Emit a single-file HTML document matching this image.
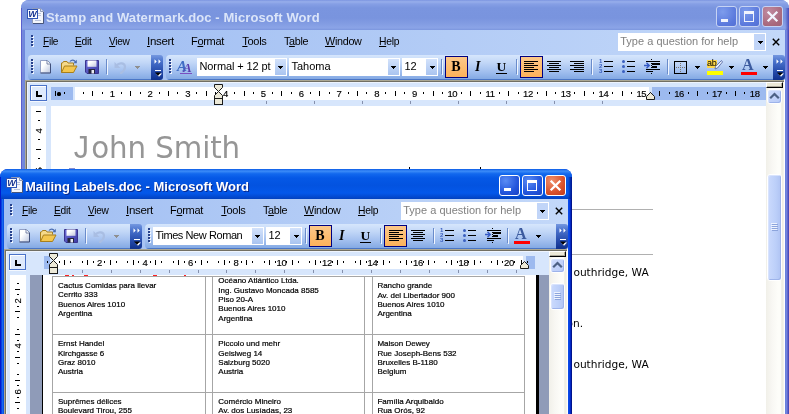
<!DOCTYPE html>
<html><head><meta charset="utf-8"><title>Microsoft Word</title>
<style>
html,body{margin:0;padding:0;background:#fff}
body{width:789px;height:414px;position:relative;overflow:hidden;font-family:"Liberation Sans",sans-serif}
#s{position:absolute;left:0;top:0;width:789px;height:414px;overflow:hidden;background:#fff;will-change:transform}
#s div,#s span,#s svg{position:absolute}
#s div{box-sizing:content-box}
.t{white-space:nowrap;font-family:"Liberation Sans",sans-serif;font-size:11px;line-height:14px}
.t u{text-decoration:underline;text-underline-offset:1px}
.rn,.vn{width:20px;height:20px;line-height:20px;text-align:center;font-size:9.5px;letter-spacing:-0.4px;-webkit-text-stroke:0.15px #000}
.vn{transform:rotate(-90deg)}
</style></head><body><div id="s">
<svg class="i" width="0" height="0" style="left:0;top:0"><defs>
<linearGradient id="gn" x1="0" y1="0" x2="1" y2="1"><stop offset="0.35" stop-color="#fff"/><stop offset="1" stop-color="#b9c4de"/></linearGradient>
<linearGradient id="gs" x1="0" y1="0" x2="1" y2="1"><stop offset="0" stop-color="#7070d8"/><stop offset="1" stop-color="#3c3ca4"/></linearGradient>
<linearGradient id="gl" x1="0" y1="0" x2="1" y2="1"><stop offset="0.3" stop-color="#fff"/><stop offset="1" stop-color="#c3c8de"/></linearGradient>
</defs></svg>
<div style="left:21px;top:0px;width:768px;height:414px;background:#7b93e1;border-radius:8px 8px 0 0"></div>
<div style="left:21px;top:0px;width:768px;height:30px;background:linear-gradient(#7c95e0 0,#97aeeb 6%,#869fe5 13%,#7a95df 26%,#7994de 60%,#839de3 80%,#8ba4e7 93%,#7b96de 100%);border-radius:8px 8px 0 0"></div>
<div style="left:21px;top:30px;width:1px;height:384px;background:#5a60cc"></div>
<div style="left:22px;top:30px;width:1px;height:384px;background:#7888dc"></div>
<div style="left:23px;top:30px;width:1px;height:384px;background:#7089dd"></div>
<div style="left:24px;top:30px;width:1px;height:384px;background:#6e86dc"></div>
<div style="left:785px;top:30px;width:1px;height:384px;background:#6a80dc"></div>
<div style="left:786px;top:30px;width:1px;height:384px;background:#7086dd"></div>
<div style="left:787px;top:30px;width:1px;height:384px;background:#6468cc"></div>
<div style="left:788px;top:30px;width:1px;height:384px;background:#494cba"></div>
<div style="left:21px;top:8px;width:1px;height:22px;background:#5a60cc"></div>
<div style="left:785px;top:8px;width:4px;height:22px;background:linear-gradient(90deg,transparent,#494cba)"></div>
<svg class="i" style="left:27px;top:8px" width="18" height="17" viewBox="0 0 18 17" >
<path d="M5.500 0.500h8l3 3v12h-11z" fill="#f4f6fb" stroke="#8d99b8" stroke-width="1"/>
<path d="M16.500 4v11.500h-10.500" fill="none" stroke="#47557c" stroke-width="1"/>
<path d="M13.500 0.500v3h3" fill="#dfe6f5" stroke="#8d99b8"/>
<path d="M8 12.500h6M11 5.500h3M11 7.500h3" stroke="#b9c3dd"/>
<rect x="0.500" y="1.500" width="10" height="9" fill="#fdfdff" stroke="#2f55b5"/>
<text x="1.300" y="9.300" font-family="Liberation Sans,sans-serif" font-weight="bold" font-style="italic" font-size="9.500" fill="#17348f" textLength="8.400" lengthAdjust="spacingAndGlyphs">W</text></svg>
<span class="t" style="left:46px;top:9.00px;font-size:13px;line-height:17px;color:#dbe5f9;font-weight:bold;letter-spacing:0.09px;">Stamp and Watermark.doc - Microsoft Word</span>
<div style="left:716px;top:6px;width:19px;height:19px;background:radial-gradient(circle at 30% 25%,#7d9cec,#5a78dc 70%,#5470d4);border:1px solid #c6d3f4;border-radius:3px"></div>
<div style="left:721px;top:19px;width:7px;height:3px;background:#f1f4fd"></div>
<div style="left:739px;top:6px;width:19px;height:19px;background:radial-gradient(circle at 30% 25%,#7d9cec,#5a78dc 70%,#5470d4);border:1px solid #c6d3f4;border-radius:3px"></div>
<div style="left:744px;top:11px;width:8px;height:7px;border:1px solid #f1f4fd;border-top-width:3px"></div>
<div style="left:762px;top:6px;width:19px;height:19px;background:radial-gradient(circle at 30% 25%,#c08aa0,#a8687c 70%,#a06478);border:1px solid #c6d3f4;border-radius:3px"></div>
<svg class="i" style="left:766px;top:10px" width="13" height="13" viewBox="0 0 13 13" ><path d="M1.700 1.700l9.600 9.600M11.300 1.700l-9.600 9.600" stroke="#f1f4fd" stroke-width="2.300" fill="none"/></svg>
<div style="left:25px;top:30px;width:760px;height:50px;background:linear-gradient(90deg,#9fbdf2,#c3d8f9)"></div>
<div style="left:32px;top:36px;width:2px;height:2px;background:#eef4fe"></div>
<div style="left:31px;top:35px;width:2px;height:2px;background:#27418c"></div>
<div style="left:32px;top:39px;width:2px;height:2px;background:#eef4fe"></div>
<div style="left:31px;top:38px;width:2px;height:2px;background:#27418c"></div>
<div style="left:32px;top:42px;width:2px;height:2px;background:#eef4fe"></div>
<div style="left:31px;top:41px;width:2px;height:2px;background:#27418c"></div>
<div style="left:32px;top:45px;width:2px;height:2px;background:#eef4fe"></div>
<div style="left:31px;top:44px;width:2px;height:2px;background:#27418c"></div>
<span class="t" style="left:42.6px;top:33.99px;font-size:11px;line-height:14px;color:#000;letter-spacing:-0.3px;transform:scaleX(0.92);transform-origin:0 0"><u>F</u>ile</span>
<span class="t" style="left:75px;top:33.99px;font-size:11px;line-height:14px;color:#000;letter-spacing:-0.3px;transform:scaleX(0.93);transform-origin:0 0"><u>E</u>dit</span>
<span class="t" style="left:109.3px;top:33.99px;font-size:11px;line-height:14px;color:#000;letter-spacing:-0.3px;transform:scaleX(0.92);transform-origin:0 0"><u>V</u>iew</span>
<span class="t" style="left:147px;top:33.99px;font-size:11px;line-height:14px;color:#000;letter-spacing:-0.3px;transform:scaleX(1.05);transform-origin:0 0"><u>I</u>nsert</span>
<span class="t" style="left:191.0px;top:33.99px;font-size:11px;line-height:14px;color:#000;letter-spacing:-0.3px;transform:scaleX(1.0);transform-origin:0 0">F<u>o</u>rmat</span>
<span class="t" style="left:242.3px;top:33.99px;font-size:11px;line-height:14px;color:#000;letter-spacing:-0.3px;transform:scaleX(1.0);transform-origin:0 0"><u>T</u>ools</span>
<span class="t" style="left:283.5px;top:33.99px;font-size:11px;line-height:14px;color:#000;letter-spacing:-0.3px;transform:scaleX(0.98);transform-origin:0 0">T<u>a</u>ble</span>
<span class="t" style="left:324.8px;top:33.99px;font-size:11px;line-height:14px;color:#000;letter-spacing:-0.3px;transform:scaleX(0.98);transform-origin:0 0"><u>W</u>indow</span>
<span class="t" style="left:379px;top:33.99px;font-size:11px;line-height:14px;color:#000;letter-spacing:-0.3px;transform:scaleX(0.94);transform-origin:0 0"><u>H</u>elp</span>
<div style="left:618px;top:33px;width:148px;height:18px;background:#fff"></div>
<div style="left:754px;top:34px;width:11px;height:16px;background:#c1d5f8"></div>
<svg class="i" style="left:758px;top:41px" width="5" height="3" viewBox="0 0 5 3" fill="#000" shape-rendering="crispEdges"><rect x="0" y="0" width="5" height="1"/><rect x="1" y="1" width="3" height="1"/><rect x="2" y="2" width="1" height="1"/></svg>
<span class="t" style="left:620.2px;top:33.79px;font-size:11px;line-height:14px;color:#808080;letter-spacing:0.02px">Type a question for help</span>
<svg class="i" style="left:772px;top:38px" width="8" height="8" viewBox="0 0 8 8" ><path d="M0.800 0.800l6.400 6.400M7.200 0.800l-6.400 6.400" stroke="#000" stroke-width="1.400" fill="none"/></svg>
<div style="left:28px;top:55px;width:124px;height:25px;background:linear-gradient(#d6e6fc 0,#c2d7f7 30%,#a3c0ef 65%,#8aaee6 90%,#84a9e3 96%,#4a76c6 96%,#4a76c6 100%);border-radius:4px 0 0 4px"></div>
<div style="left:151px;top:55px;width:12px;height:25px;background:linear-gradient(#7598e0 0,#4a72cc 25%,#2348a8 70%,#0f318c 100%);border-radius:0 3px 3px 0"></div>
<svg class="i" style="left:154px;top:59px" width="8" height="5" viewBox="0 0 8 5" ><path d="M0.500 0.300l2.200 2.200-2.200 2.200zM4.500 0.300l2.200 2.200-2.200 2.200z" fill="#fff"/></svg>
<div style="left:155px;top:70px;width:6px;height:1px;background:#fff"></div>
<svg class="i" style="left:154px;top:72px" width="9" height="6" viewBox="0 0 9 6" ><path d="M2 1.500h6l-3 3.200z" fill="#fff"/><path d="M1 0.500h6l-3 3.200z" fill="#000"/></svg>
<div style="left:32px;top:60px;width:2px;height:2px;background:#eef4fe"></div>
<div style="left:31px;top:59px;width:2px;height:2px;background:#27418c"></div>
<div style="left:32px;top:63px;width:2px;height:2px;background:#eef4fe"></div>
<div style="left:31px;top:62px;width:2px;height:2px;background:#27418c"></div>
<div style="left:32px;top:66px;width:2px;height:2px;background:#eef4fe"></div>
<div style="left:31px;top:65px;width:2px;height:2px;background:#27418c"></div>
<div style="left:32px;top:69px;width:2px;height:2px;background:#eef4fe"></div>
<div style="left:31px;top:68px;width:2px;height:2px;background:#27418c"></div>
<div style="left:32px;top:72px;width:2px;height:2px;background:#eef4fe"></div>
<div style="left:31px;top:71px;width:2px;height:2px;background:#27418c"></div>
<svg class="i" style="left:40px;top:60px" width="12" height="14" viewBox="0 0 12 14" >
<path d="M0.500 0.500h6.500l3.500 3.500v9h-10z" fill="url(#gn)" stroke="#93a1c6"/>
<path d="M7 0.500l3.500 3.500v9h-10" fill="none" stroke="#3f4f7a"/>
<path d="M7 0.500v3.500h3.500" fill="#fff" stroke="#5b6a94" stroke-width="0.800"/></svg>
<svg class="i" style="left:61px;top:59px" width="17" height="15" viewBox="0 0 17 15" >
<path d="M0.500 13.500v-9.500h1l1-1.500h3.500l1 1.500h5.500v2.500" fill="#f5d98a" stroke="#a77f1c"/>
<path d="M0.500 13.500l3-6.500h12.500l-3.500 6.500z" fill="#f3c64e" stroke="#a77f1c"/>
<path d="M9 2.500c1.500-2 4.500-2 5.500 0.500" fill="none" stroke="#4a6cb0" stroke-width="1.200"/>
<path d="M15.800 0.800v3.400h-3.400z" fill="#4a6cb0"/></svg>
<svg class="i" style="left:85px;top:60px" width="14" height="14" viewBox="0 0 14 14" >
<path d="M0.500 0.500h13v13h-11.500l-1.500-1.500z" fill="url(#gs)" stroke="#3a348f"/>
<rect x="2.500" y="0.500" width="9" height="6.300" fill="url(#gl)"/>
<rect x="3.500" y="9" width="6.500" height="4.500" fill="#25253a"/>
<rect x="6.500" y="10" width="2.500" height="3.500" fill="#e9ebf3"/></svg>
<div style="left:106px;top:59px;width:1px;height:15px;background:#6a8ccb"></div>
<div style="left:107px;top:60px;width:1px;height:15px;background:#f1f6fe"></div>
<svg class="i" style="left:114px;top:60px" width="14" height="14" viewBox="0 0 14 14" >
<path d="M2.500 5.500c3-3.500 8.500-2.500 8.500 1.500c0 3-2 4.500-4 6" fill="none" stroke="#a9bee3" stroke-width="2.200" stroke-linecap="round"/>
<path d="M0.500 2v6h6z" fill="#a9bee3"/></svg>
<svg class="i" style="left:135px;top:66px" width="5" height="3" viewBox="0 0 5 3" fill="#8f8f8f" shape-rendering="crispEdges"><rect x="0" y="0" width="5" height="1"/><rect x="1" y="1" width="3" height="1"/><rect x="2" y="2" width="1" height="1"/></svg>
<div style="left:166px;top:55px;width:607px;height:25px;background:linear-gradient(#d6e6fc 0,#c2d7f7 30%,#a3c0ef 65%,#8aaee6 90%,#84a9e3 96%,#4a76c6 96%,#4a76c6 100%);border-radius:4px 0 0 4px"></div>
<div style="left:773px;top:55px;width:12px;height:25px;background:linear-gradient(#7598e0 0,#4a72cc 25%,#2348a8 70%,#0f318c 100%);border-radius:0 3px 3px 0"></div>
<svg class="i" style="left:776px;top:59px" width="8" height="5" viewBox="0 0 8 5" ><path d="M0.500 0.300l2.200 2.200-2.200 2.200zM4.500 0.300l2.200 2.200-2.200 2.200z" fill="#fff"/></svg>
<div style="left:777px;top:70px;width:6px;height:1px;background:#fff"></div>
<svg class="i" style="left:776px;top:72px" width="9" height="6" viewBox="0 0 9 6" ><path d="M2 1.500h6l-3 3.200z" fill="#fff"/><path d="M1 0.500h6l-3 3.200z" fill="#000"/></svg>
<div style="left:170px;top:60px;width:2px;height:2px;background:#eef4fe"></div>
<div style="left:169px;top:59px;width:2px;height:2px;background:#27418c"></div>
<div style="left:170px;top:63px;width:2px;height:2px;background:#eef4fe"></div>
<div style="left:169px;top:62px;width:2px;height:2px;background:#27418c"></div>
<div style="left:170px;top:66px;width:2px;height:2px;background:#eef4fe"></div>
<div style="left:169px;top:65px;width:2px;height:2px;background:#27418c"></div>
<div style="left:170px;top:69px;width:2px;height:2px;background:#eef4fe"></div>
<div style="left:169px;top:68px;width:2px;height:2px;background:#27418c"></div>
<div style="left:170px;top:72px;width:2px;height:2px;background:#eef4fe"></div>
<div style="left:169px;top:71px;width:2px;height:2px;background:#27418c"></div>
<span class="t" style="left:177px;top:58px;font:italic bold 15px/16px 'Liberation Serif',serif;color:#3f6cc4">A</span>
<span class="t" style="left:183px;top:61px;font:italic bold 13px/14px 'Liberation Serif',serif;color:#5a3fb0">A</span>
<div style="left:180px;top:73px;width:12px;height:1px;background:#7a4fc0"></div>
<div style="left:197px;top:58px;width:89.5px;height:18px;background:#fff"></div>
<div style="left:274.5px;top:59px;width:11px;height:16px;background:linear-gradient(#d3e2fb,#a9c4f0)"></div>
<svg class="i" style="left:278px;top:66px" width="5" height="3" viewBox="0 0 5 3" fill="#000" shape-rendering="crispEdges"><rect x="0" y="0" width="5" height="1"/><rect x="1" y="1" width="3" height="1"/><rect x="2" y="2" width="1" height="1"/></svg>
<span class="t" style="left:199.5px;top:59.19px;font-size:11px;line-height:14px;color:#000;letter-spacing:-0.1px">Normal + 12 pt</span>
<div style="left:289px;top:58px;width:110.5px;height:18px;background:#fff"></div>
<div style="left:387.5px;top:59px;width:11px;height:16px;background:linear-gradient(#d3e2fb,#a9c4f0)"></div>
<svg class="i" style="left:391px;top:66px" width="5" height="3" viewBox="0 0 5 3" fill="#000" shape-rendering="crispEdges"><rect x="0" y="0" width="5" height="1"/><rect x="1" y="1" width="3" height="1"/><rect x="2" y="2" width="1" height="1"/></svg>
<span class="t" style="left:291.5px;top:59.19px;font-size:11px;line-height:14px;color:#000;letter-spacing:0px">Tahoma</span>
<div style="left:402px;top:58px;width:36px;height:18px;background:#fff"></div>
<div style="left:426px;top:59px;width:11px;height:16px;background:linear-gradient(#d3e2fb,#a9c4f0)"></div>
<svg class="i" style="left:430px;top:66px" width="5" height="3" viewBox="0 0 5 3" fill="#000" shape-rendering="crispEdges"><rect x="0" y="0" width="5" height="1"/><rect x="1" y="1" width="3" height="1"/><rect x="2" y="2" width="1" height="1"/></svg>
<span class="t" style="left:404.5px;top:59.19px;font-size:11px;line-height:14px;color:#000;letter-spacing:0px">12</span>
<div style="left:441px;top:59px;width:1px;height:15px;background:#6a8ccb"></div>
<div style="left:442px;top:60px;width:1px;height:15px;background:#f1f6fe"></div>
<div style="left:445px;top:56px;width:21px;height:20px;background:linear-gradient(#fcc88a,#fdb25a);border:1px solid #000080"></div>
<span class="t" style="left:451.3px;top:58px;font:bold 14px/18px 'Liberation Serif',serif;color:#000">B</span>
<span class="t" style="left:475px;top:58px;font:italic bold 14px/18px 'Liberation Serif',serif;color:#000">I</span>
<span class="t" style="left:496.5px;top:58px;font:bold 13.500px/18px 'Liberation Serif',serif;color:#000">U</span>
<div style="left:496px;top:73px;width:11px;height:1px;background:#000"></div>
<div style="left:515.5px;top:59px;width:1px;height:15px;background:#6a8ccb"></div>
<div style="left:516.5px;top:60px;width:1px;height:15px;background:#f1f6fe"></div>
<div style="left:520px;top:56px;width:21px;height:20px;background:linear-gradient(#fcc88a,#fdb25a);border:1px solid #000080"></div>
<svg class="i" style="left:524px;top:61px" width="16" height="14" viewBox="0 0 16 14" fill="#000" shape-rendering="crispEdges"><rect x="0" y="0" width="14" height="1"/><rect x="0" y="2" width="10" height="1"/><rect x="0" y="4" width="14" height="1"/><rect x="0" y="6" width="10" height="1"/><rect x="0" y="8" width="14" height="1"/><rect x="0" y="10" width="10" height="1"/></svg>
<svg class="i" style="left:547px;top:61px" width="16" height="14" viewBox="0 0 16 14" fill="#000" shape-rendering="crispEdges"><rect x="0" y="0" width="14" height="1"/><rect x="2" y="2" width="10" height="1"/><rect x="0" y="4" width="14" height="1"/><rect x="2" y="6" width="10" height="1"/><rect x="0" y="8" width="14" height="1"/><rect x="2" y="10" width="10" height="1"/></svg>
<svg class="i" style="left:570px;top:61px" width="16" height="14" viewBox="0 0 16 14" fill="#000" shape-rendering="crispEdges"><rect x="0" y="0" width="14" height="1"/><rect x="4" y="2" width="10" height="1"/><rect x="0" y="4" width="14" height="1"/><rect x="4" y="6" width="10" height="1"/><rect x="0" y="8" width="14" height="1"/><rect x="4" y="10" width="10" height="1"/></svg>
<div style="left:591px;top:59px;width:1px;height:15px;background:#6a8ccb"></div>
<div style="left:592px;top:60px;width:1px;height:15px;background:#f1f6fe"></div>
<svg class="i" style="left:604px;top:61px" width="16" height="14" viewBox="0 0 16 14" fill="#000" shape-rendering="crispEdges"><rect x="0" y="0" width="9" height="1"/><rect x="0" y="5" width="9" height="1"/><rect x="0" y="10" width="9" height="1"/></svg>
<span class="t" style="left:599px;top:58px;font:bold 6px/7px 'Liberation Sans',sans-serif;color:#3a5fc0">1</span>
<span class="t" style="left:599px;top:63px;font:bold 6px/7px 'Liberation Sans',sans-serif;color:#3a5fc0">2</span>
<span class="t" style="left:599px;top:68px;font:bold 6px/7px 'Liberation Sans',sans-serif;color:#3a5fc0">3</span>
<svg class="i" style="left:627px;top:61px" width="16" height="14" viewBox="0 0 16 14" fill="#000" shape-rendering="crispEdges"><rect x="0" y="0" width="8" height="1"/><rect x="0" y="5" width="8" height="1"/><rect x="0" y="10" width="8" height="1"/></svg>
<svg class="i" style="left:622px;top:60px" width="4" height="14" viewBox="0 0 4 14" fill="#3a5fc0"><circle cx="1.500" cy="1.500" r="1.500"/><circle cx="1.500" cy="6.500" r="1.500"/><circle cx="1.500" cy="11.500" r="1.500"/></svg>
<svg class="i" style="left:644px;top:59px" width="17" height="15" viewBox="0 0 17 15" fill="#000" shape-rendering="crispEdges"><rect x="2" y="2" width="14" height="1"/><rect x="8" y="4" width="8" height="2"/><rect x="8" y="7" width="5" height="2"/><rect x="2" y="10" width="14" height="1"/><rect x="2" y="12" width="7" height="1"/><rect x="6" y="0" width="3" height="15" fill="#c3d8f7" opacity="0.0"/><rect x="7" y="0" width="1" height="1"/><rect x="7" y="2" width="1" height="1"/><rect x="7" y="4" width="1" height="1"/><rect x="7" y="6" width="1" height="1"/><rect x="7" y="8" width="1" height="1"/><rect x="7" y="10" width="1" height="1"/><rect x="7" y="12" width="1" height="1"/><rect x="7" y="14" width="1" height="1"/></svg>
<svg class="i" style="left:644px;top:62px" width="7" height="7" viewBox="0 0 7 7" ><path d="M0 3.500h5M2.500 0.800l2.700 2.700L2.500 6.200" fill="none" stroke="#3358c4" stroke-width="1.400"/></svg>
<div style="left:666.5px;top:59px;width:1px;height:15px;background:#6a8ccb"></div>
<div style="left:667.5px;top:60px;width:1px;height:15px;background:#f1f6fe"></div>
<svg class="i" style="left:674px;top:61px" width="13" height="13" viewBox="0 0 13 13" shape-rendering="crispEdges"><path d="M0 0h13v13h-13zM1 1v11h11v-11z" fill="#000" fill-rule="evenodd"/><rect x="2" y="6" width="1" height="1" fill="#7d7468"/><rect x="6" y="2" width="1" height="1" fill="#7d7468"/><rect x="4" y="6" width="1" height="1" fill="#7d7468"/><rect x="6" y="4" width="1" height="1" fill="#7d7468"/><rect x="6" y="6" width="1" height="1" fill="#7d7468"/><rect x="6" y="6" width="1" height="1" fill="#7d7468"/><rect x="8" y="6" width="1" height="1" fill="#7d7468"/><rect x="6" y="8" width="1" height="1" fill="#7d7468"/><rect x="10" y="6" width="1" height="1" fill="#7d7468"/><rect x="6" y="10" width="1" height="1" fill="#7d7468"/></svg>
<svg class="i" style="left:695px;top:66px" width="5" height="3" viewBox="0 0 5 3" fill="#000" shape-rendering="crispEdges"><rect x="0" y="0" width="5" height="1"/><rect x="1" y="1" width="3" height="1"/><rect x="2" y="2" width="1" height="1"/></svg>
<div style="left:707px;top:60px;width:10px;height:8px;background:#ffd84a"></div>
<span class="t" style="left:707px;top:57px;font:9px/12px 'Liberation Sans',sans-serif;color:#000;letter-spacing:-0.3px">ab</span>
<svg class="i" style="left:713px;top:60px" width="10" height="10" viewBox="0 0 10 10" ><path d="M8.500 0.500l1 1.500-5 6-2.500 1 0.500-2.500z" fill="#e9eefb" stroke="#5a6fa8" stroke-width="0.900"/></svg>
<div style="left:707px;top:71px;width:16px;height:4px;background:#ffff00"></div>
<svg class="i" style="left:729px;top:66px" width="5" height="3" viewBox="0 0 5 3" fill="#000" shape-rendering="crispEdges"><rect x="0" y="0" width="5" height="1"/><rect x="1" y="1" width="3" height="1"/><rect x="2" y="2" width="1" height="1"/></svg>
<span class="t" style="left:742px;top:57px;font:bold 16px/16px 'Liberation Serif',serif;color:#3b5a9e">A</span>
<div style="left:741px;top:72px;width:16px;height:3px;background:#ff0000"></div>
<svg class="i" style="left:763px;top:66px" width="5" height="3" viewBox="0 0 5 3" fill="#000" shape-rendering="crispEdges"><rect x="0" y="0" width="5" height="1"/><rect x="1" y="1" width="3" height="1"/><rect x="2" y="2" width="1" height="1"/></svg>
<div style="left:25px;top:80px;width:760px;height:1px;background:#aca893"></div>
<div style="left:26px;top:81px;width:759px;height:1px;background:#716f64"></div>
<div style="left:25px;top:82px;width:760px;height:332px;background:#d7e6fc"></div>
<div style="left:25px;top:80px;width:1px;height:334px;background:#aca893"></div>
<div style="left:26px;top:81px;width:1px;height:333px;background:#716f64"></div>
<div style="left:27px;top:82px;width:758px;height:1px;background:#eef4fe"></div>
<div style="left:27px;top:82px;width:1px;height:332px;background:#eef4fe"></div>
<div style="left:30px;top:85px;width:17px;height:16px;background:#dfeafc;border:1px solid #4a72c9;box-sizing:border-box;box-shadow:0 1px 0 0 #f4f8fe, inset 1px 1px 0 0 #fff"></div>
<div style="left:36px;top:91px;width:2px;height:6px;background:#000"></div>
<div style="left:36px;top:95px;width:6px;height:2px;background:#000"></div>
<div style="left:51px;top:87px;width:22px;height:13px;background:#9dbaef"></div>
<div style="left:75px;top:87px;width:574px;height:13px;background:#fff"></div>
<div style="left:652px;top:87px;width:114px;height:13px;background:#9dbaef"></div>
<div style="left:55px;top:91px;width:1px;height:5px;background:#000"></div>
<div style="left:64px;top:92px;width:1px;height:2px;background:#000"></div>
<div style="left:83px;top:92px;width:1px;height:2px;background:#000"></div>
<div style="left:92px;top:91px;width:1px;height:5px;background:#000"></div>
<div style="left:102px;top:92px;width:1px;height:2px;background:#000"></div>
<span class="t rn" style="left:102.10px;top:83.50px">1</span>
<div style="left:121px;top:92px;width:1px;height:2px;background:#000"></div>
<div style="left:130px;top:91px;width:1px;height:5px;background:#000"></div>
<div style="left:140px;top:92px;width:1px;height:2px;background:#000"></div>
<span class="t rn" style="left:139.90px;top:83.50px">2</span>
<div style="left:159px;top:92px;width:1px;height:2px;background:#000"></div>
<div style="left:168px;top:91px;width:1px;height:5px;background:#000"></div>
<div style="left:177px;top:92px;width:1px;height:2px;background:#000"></div>
<span class="t rn" style="left:177.70px;top:83.50px">3</span>
<div style="left:196px;top:92px;width:1px;height:2px;background:#000"></div>
<div style="left:206px;top:91px;width:1px;height:5px;background:#000"></div>
<div style="left:215px;top:92px;width:1px;height:2px;background:#000"></div>
<span class="t rn" style="left:215.50px;top:83.50px">4</span>
<div style="left:234px;top:92px;width:1px;height:2px;background:#000"></div>
<div style="left:244px;top:91px;width:1px;height:5px;background:#000"></div>
<div style="left:253px;top:92px;width:1px;height:2px;background:#000"></div>
<span class="t rn" style="left:253.30px;top:83.50px">5</span>
<div style="left:272px;top:92px;width:1px;height:2px;background:#000"></div>
<div style="left:281px;top:91px;width:1px;height:5px;background:#000"></div>
<div style="left:291px;top:92px;width:1px;height:2px;background:#000"></div>
<span class="t rn" style="left:291.10px;top:83.50px">6</span>
<div style="left:310px;top:92px;width:1px;height:2px;background:#000"></div>
<div style="left:319px;top:91px;width:1px;height:5px;background:#000"></div>
<div style="left:329px;top:92px;width:1px;height:2px;background:#000"></div>
<span class="t rn" style="left:328.90px;top:83.50px">7</span>
<div style="left:348px;top:92px;width:1px;height:2px;background:#000"></div>
<div style="left:357px;top:91px;width:1px;height:5px;background:#000"></div>
<div style="left:366px;top:92px;width:1px;height:2px;background:#000"></div>
<span class="t rn" style="left:366.70px;top:83.50px">8</span>
<div style="left:385px;top:92px;width:1px;height:2px;background:#000"></div>
<div style="left:395px;top:91px;width:1px;height:5px;background:#000"></div>
<div style="left:404px;top:92px;width:1px;height:2px;background:#000"></div>
<span class="t rn" style="left:404.50px;top:83.50px">9</span>
<div style="left:423px;top:92px;width:1px;height:2px;background:#000"></div>
<div style="left:433px;top:91px;width:1px;height:5px;background:#000"></div>
<div style="left:442px;top:92px;width:1px;height:2px;background:#000"></div>
<span class="t rn" style="left:442.30px;top:83.50px">10</span>
<div style="left:461px;top:92px;width:1px;height:2px;background:#000"></div>
<div style="left:470px;top:91px;width:1px;height:5px;background:#000"></div>
<div style="left:480px;top:92px;width:1px;height:2px;background:#000"></div>
<span class="t rn" style="left:480.10px;top:83.50px">11</span>
<div style="left:499px;top:92px;width:1px;height:2px;background:#000"></div>
<div style="left:508px;top:91px;width:1px;height:5px;background:#000"></div>
<div style="left:518px;top:92px;width:1px;height:2px;background:#000"></div>
<span class="t rn" style="left:517.90px;top:83.50px">12</span>
<div style="left:537px;top:92px;width:1px;height:2px;background:#000"></div>
<div style="left:546px;top:91px;width:1px;height:5px;background:#000"></div>
<div style="left:555px;top:92px;width:1px;height:2px;background:#000"></div>
<span class="t rn" style="left:555.70px;top:83.50px">13</span>
<div style="left:574px;top:92px;width:1px;height:2px;background:#000"></div>
<div style="left:584px;top:91px;width:1px;height:5px;background:#000"></div>
<div style="left:593px;top:92px;width:1px;height:2px;background:#000"></div>
<span class="t rn" style="left:593.50px;top:83.50px">14</span>
<div style="left:612px;top:92px;width:1px;height:2px;background:#000"></div>
<div style="left:622px;top:91px;width:1px;height:5px;background:#000"></div>
<div style="left:631px;top:92px;width:1px;height:2px;background:#000"></div>
<span class="t rn" style="left:631.30px;top:83.50px">15</span>
<div style="left:650px;top:92px;width:1px;height:2px;background:#000"></div>
<div style="left:659px;top:91px;width:1px;height:5px;background:#000"></div>
<div style="left:669px;top:92px;width:1px;height:2px;background:#000"></div>
<span class="t rn" style="left:669.10px;top:83.50px">16</span>
<div style="left:688px;top:92px;width:1px;height:2px;background:#000"></div>
<div style="left:697px;top:91px;width:1px;height:5px;background:#000"></div>
<div style="left:707px;top:92px;width:1px;height:2px;background:#000"></div>
<span class="t rn" style="left:706.90px;top:83.50px">17</span>
<div style="left:726px;top:92px;width:1px;height:2px;background:#000"></div>
<div style="left:735px;top:91px;width:1px;height:5px;background:#000"></div>
<div style="left:744px;top:92px;width:1px;height:2px;background:#000"></div>
<span class="t rn" style="left:744.70px;top:83.50px">18</span>
<div style="left:57px;top:92px;width:4px;height:4px;background:#000;border-radius:1.600px"></div>
<div style="left:266px;top:101px;width:1px;height:3px;background:#8590ad"></div>
<div style="left:314px;top:101px;width:1px;height:3px;background:#8590ad"></div>
<div style="left:362px;top:101px;width:1px;height:3px;background:#8590ad"></div>
<div style="left:410px;top:101px;width:1px;height:3px;background:#8590ad"></div>
<div style="left:458px;top:101px;width:1px;height:3px;background:#8590ad"></div>
<div style="left:506px;top:101px;width:1px;height:3px;background:#8590ad"></div>
<div style="left:554px;top:101px;width:1px;height:3px;background:#8590ad"></div>
<div style="left:602px;top:101px;width:1px;height:3px;background:#8590ad"></div>
<svg class="i" style="left:214px;top:84px" width="9" height="21" viewBox="0 0 9 21" ><g fill="#ece9d8" stroke="#1a1a1a" stroke-width="1">
<path d="M0.500 0.500h8v3l-4 4-4-4z"/><path d="M0.500 14.500v-3l4-4 4 4v3z"/><rect x="0.500" y="14.500" width="8" height="6"/></g></svg>
<svg class="i" style="left:646px;top:92px" width="9" height="8" viewBox="0 0 9 8" ><path d="M0.500 7.500v-3l4-4 4 4v3z" fill="#ece9d8" stroke="#1a1a1a"/></svg>
<div style="left:51px;top:106px;width:716px;height:308px;background:#fff"></div>
<div style="left:31px;top:106px;width:15px;height:308px;background:#fff"></div>
<div style="left:36px;top:111px;width:5px;height:1px;background:#000"></div>
<div style="left:38px;top:120px;width:2px;height:1px;background:#000"></div>
<span class="t vn" style="left:29.00px;top:120.50px">4</span>
<div style="left:38px;top:139px;width:2px;height:1px;background:#000"></div>
<div style="left:36px;top:149px;width:5px;height:1px;background:#000"></div>
<div style="left:38px;top:158px;width:2px;height:1px;background:#000"></div>
<span class="t vn" style="left:29.00px;top:160.10px">5</span>
<div style="left:38px;top:177px;width:2px;height:1px;background:#000"></div>
<div style="left:36px;top:187px;width:5px;height:1px;background:#000"></div>
<div style="left:38px;top:196px;width:2px;height:1px;background:#000"></div>
<span class="t vn" style="left:29.00px;top:196.10px">6</span>
<div style="left:38px;top:215px;width:2px;height:1px;background:#000"></div>
<div style="left:36px;top:225px;width:5px;height:1px;background:#000"></div>
<div style="left:38px;top:233px;width:2px;height:1px;background:#000"></div>
<span class="t vn" style="left:29.00px;top:233.90px">7</span>
<div style="left:38px;top:252px;width:2px;height:1px;background:#000"></div>
<div style="left:36px;top:262px;width:5px;height:1px;background:#000"></div>
<div style="left:38px;top:271px;width:2px;height:1px;background:#000"></div>
<span class="t vn" style="left:29.00px;top:271.70px">8</span>
<div style="left:38px;top:290px;width:2px;height:1px;background:#000"></div>
<div style="left:36px;top:300px;width:5px;height:1px;background:#000"></div>
<div style="left:38px;top:309px;width:2px;height:1px;background:#000"></div>
<span class="t vn" style="left:29.00px;top:309.50px">9</span>
<div style="left:38px;top:328px;width:2px;height:1px;background:#000"></div>
<div style="left:36px;top:338px;width:5px;height:1px;background:#000"></div>
<div style="left:38px;top:347px;width:2px;height:1px;background:#000"></div>
<span class="t vn" style="left:29.00px;top:347.30px">10</span>
<div style="left:38px;top:366px;width:2px;height:1px;background:#000"></div>
<div style="left:36px;top:376px;width:5px;height:1px;background:#000"></div>
<div style="left:38px;top:385px;width:2px;height:1px;background:#000"></div>
<span class="t vn" style="left:29.00px;top:385.10px">11</span>
<div style="left:38px;top:404px;width:2px;height:1px;background:#000"></div>
<div style="left:766px;top:82px;width:17px;height:332px;background:linear-gradient(90deg,#f1f0e9,#f8f7f3 35%,#fdfdf9 70%,#fdfdf9 88%,#efeee4 92%)"></div>
<div style="left:783px;top:82px;width:1px;height:332px;background:#f4f3ec"></div>
<div style="left:784px;top:80px;width:1px;height:334px;background:#fff"></div>
<div style="left:766px;top:82px;width:17px;height:6px;background:#ece9d8;box-sizing:border-box;border:1px solid #fff;border-right-color:#000;border-bottom-color:#000;box-shadow:inset -1px -1px 0 #aca899"></div>
<div style="left:767px;top:89px;width:15px;height:15px;background:linear-gradient(135deg,#cfdcfd,#b7caf7);box-sizing:border-box;border:1px solid #fff;border-radius:3px;box-shadow:inset -1px -1px 0 #9db3ea, inset 1px 1px 0 #d8e3fd;"></div>
<svg class="i" style="left:769px;top:92px" width="11" height="8" viewBox="0 0 11 8" ><path d="M1.200 6.300l4.300-4.300 4.300 4.300" fill="none" stroke="#4d6185" stroke-width="2.200"/></svg>
<div style="left:767px;top:174px;width:15px;height:107px;background:linear-gradient(90deg,#cbdafd,#bccff9 60%,#afc3f3);box-sizing:border-box;border:1px solid #fff;border-radius:3px;box-shadow:inset -1px -1px 0 #9db3ea, inset 1px 1px 0 #d8e3fd;"></div>
<div style="left:771px;top:223px;width:6px;height:1px;background:#eef3fe"></div>
<div style="left:772px;top:224px;width:6px;height:1px;background:#8ca4dc"></div>
<div style="left:771px;top:225px;width:6px;height:1px;background:#eef3fe"></div>
<div style="left:772px;top:226px;width:6px;height:1px;background:#8ca4dc"></div>
<div style="left:771px;top:227px;width:6px;height:1px;background:#eef3fe"></div>
<div style="left:772px;top:228px;width:6px;height:1px;background:#8ca4dc"></div>
<div style="left:771px;top:229px;width:6px;height:1px;background:#eef3fe"></div>
<div style="left:772px;top:230px;width:6px;height:1px;background:#8ca4dc"></div>
<span class="t" style="left:73.8px;top:127.23px;font-size:30.5px;line-height:40px;color:#969696;">J<span style="position:static;font-family:'DejaVu Sans','Liberation Sans',sans-serif;font-size:29.3px;letter-spacing:-0.1px;margin-left:2.2px">ohn Smith</span></span>
<div style="left:75px;top:209px;width:578px;height:1px;background:#b0b0b0"></div>
<div style="left:75px;top:254px;width:578px;height:1px;background:#b0b0b0"></div>
<span class="t" style="right:219.60000000000002px;top:264.62px;font-size:10.62px;line-height:16px;font-family:'DejaVu Sans','Liberation Sans',sans-serif;">1234 Main Street, S</span>
<span class="t" style="left:573.4px;top:264.62px;font-size:10.62px;line-height:16px;font-family:'DejaVu Sans','Liberation Sans',sans-serif;">outhridge, WA</span>
<span class="t" style="right:226.5px;top:315.72px;font-size:10.62px;line-height:16px;font-family:'DejaVu Sans','Liberation Sans',sans-serif;">Looking forward to your reply so</span>
<span class="t" style="left:566.5px;top:315.72px;font-size:10.62px;line-height:16px;font-family:'DejaVu Sans','Liberation Sans',sans-serif;">on.</span>
<span class="t" style="right:219.60000000000002px;top:357.02px;font-size:10.62px;line-height:16px;font-family:'DejaVu Sans','Liberation Sans',sans-serif;">5678 Oak Avenue, S</span>
<span class="t" style="left:573.4px;top:357.02px;font-size:10.62px;line-height:16px;font-family:'DejaVu Sans','Liberation Sans',sans-serif;">outhridge, WA</span>
<div style="left:409px;top:167px;width:1px;height:2px;background:#000"></div>
<div style="left:480px;top:167px;width:1px;height:2px;background:#000"></div>
<div style="left:69px;top:168px;width:6px;height:1px;background:#8a8ed0"></div>
<div style="left:0px;top:169px;width:572px;height:245px;background:#0831d9;border-radius:8px 8px 0 0"></div>
<div style="left:0px;top:169px;width:572px;height:30px;background:linear-gradient(#0a5ae6 0,#3c8cf8 7%,#1268ee 16%,#0558e6 30%,#0353e0 55%,#0458ea 80%,#0349d0 93%,#0241bd 100%);border-radius:8px 8px 0 0"></div>
<div style="left:0px;top:199px;width:1px;height:215px;background:#0019cf"></div>
<div style="left:1px;top:199px;width:1px;height:215px;background:#0a40e0"></div>
<div style="left:2px;top:199px;width:1px;height:215px;background:#1668f0"></div>
<div style="left:3px;top:199px;width:1px;height:215px;background:#0a52e4"></div>
<div style="left:568px;top:199px;width:1px;height:215px;background:#0a4ae8"></div>
<div style="left:569px;top:199px;width:1px;height:215px;background:#0840e0"></div>
<div style="left:570px;top:199px;width:1px;height:215px;background:#0328c4"></div>
<div style="left:571px;top:199px;width:1px;height:215px;background:#00138c"></div>
<div style="left:0px;top:177px;width:1px;height:22px;background:#0019cf"></div>
<div style="left:568px;top:177px;width:4px;height:22px;background:linear-gradient(90deg,transparent,#00138c)"></div>
<svg class="i" style="left:6px;top:177px" width="18" height="17" viewBox="0 0 18 17" >
<path d="M5.500 0.500h8l3 3v12h-11z" fill="#f4f6fb" stroke="#8d99b8" stroke-width="1"/>
<path d="M16.500 4v11.500h-10.500" fill="none" stroke="#47557c" stroke-width="1"/>
<path d="M13.500 0.500v3h3" fill="#dfe6f5" stroke="#8d99b8"/>
<path d="M8 12.500h6M11 5.500h3M11 7.500h3" stroke="#b9c3dd"/>
<rect x="0.500" y="1.500" width="10" height="9" fill="#fdfdff" stroke="#2f55b5"/>
<text x="1.300" y="9.300" font-family="Liberation Sans,sans-serif" font-weight="bold" font-style="italic" font-size="9.500" fill="#17348f" textLength="8.400" lengthAdjust="spacingAndGlyphs">W</text></svg>
<span class="t" style="left:25px;top:178.40px;font-size:13px;line-height:17px;color:#fff;font-weight:bold;text-shadow:1px 1px 0 #0a2a8c;letter-spacing:0.03px;">Mailing Labels.doc - Microsoft Word</span>
<div style="left:499px;top:175px;width:19px;height:19px;background:radial-gradient(circle at 30% 25%,#5a8cf4,#2456dc 60%,#1a41c4);border:1px solid #fff;border-radius:3px"></div>
<div style="left:504px;top:188px;width:7px;height:3px;background:#fff"></div>
<div style="left:522px;top:175px;width:19px;height:19px;background:radial-gradient(circle at 30% 25%,#5a8cf4,#2456dc 60%,#1a41c4);border:1px solid #fff;border-radius:3px"></div>
<div style="left:527px;top:180px;width:8px;height:7px;border:1px solid #fff;border-top-width:3px"></div>
<div style="left:545px;top:175px;width:19px;height:19px;background:radial-gradient(circle at 30% 25%,#f0906c,#d9522c 60%,#c03a18);border:1px solid #fff;border-radius:3px"></div>
<svg class="i" style="left:549px;top:179px" width="13" height="13" viewBox="0 0 13 13" ><path d="M1.700 1.700l9.600 9.600M11.300 1.700l-9.600 9.600" stroke="#fff" stroke-width="2.300" fill="none"/></svg>
<div style="left:4px;top:199px;width:564px;height:50px;background:linear-gradient(90deg,#9fbdf2,#c3d8f9)"></div>
<div style="left:11px;top:205px;width:2px;height:2px;background:#eef4fe"></div>
<div style="left:10px;top:204px;width:2px;height:2px;background:#27418c"></div>
<div style="left:11px;top:208px;width:2px;height:2px;background:#eef4fe"></div>
<div style="left:10px;top:207px;width:2px;height:2px;background:#27418c"></div>
<div style="left:11px;top:211px;width:2px;height:2px;background:#eef4fe"></div>
<div style="left:10px;top:210px;width:2px;height:2px;background:#27418c"></div>
<div style="left:11px;top:214px;width:2px;height:2px;background:#eef4fe"></div>
<div style="left:10px;top:213px;width:2px;height:2px;background:#27418c"></div>
<span class="t" style="left:21.6px;top:202.99px;font-size:11px;line-height:14px;color:#000;letter-spacing:-0.3px;transform:scaleX(0.92);transform-origin:0 0"><u>F</u>ile</span>
<span class="t" style="left:54px;top:202.99px;font-size:11px;line-height:14px;color:#000;letter-spacing:-0.3px;transform:scaleX(0.93);transform-origin:0 0"><u>E</u>dit</span>
<span class="t" style="left:88.3px;top:202.99px;font-size:11px;line-height:14px;color:#000;letter-spacing:-0.3px;transform:scaleX(0.92);transform-origin:0 0"><u>V</u>iew</span>
<span class="t" style="left:126px;top:202.99px;font-size:11px;line-height:14px;color:#000;letter-spacing:-0.3px;transform:scaleX(1.05);transform-origin:0 0"><u>I</u>nsert</span>
<span class="t" style="left:170.0px;top:202.99px;font-size:11px;line-height:14px;color:#000;letter-spacing:-0.3px;transform:scaleX(1.0);transform-origin:0 0">F<u>o</u>rmat</span>
<span class="t" style="left:221.3px;top:202.99px;font-size:11px;line-height:14px;color:#000;letter-spacing:-0.3px;transform:scaleX(1.0);transform-origin:0 0"><u>T</u>ools</span>
<span class="t" style="left:262.5px;top:202.99px;font-size:11px;line-height:14px;color:#000;letter-spacing:-0.3px;transform:scaleX(0.98);transform-origin:0 0">T<u>a</u>ble</span>
<span class="t" style="left:303.8px;top:202.99px;font-size:11px;line-height:14px;color:#000;letter-spacing:-0.3px;transform:scaleX(0.98);transform-origin:0 0"><u>W</u>indow</span>
<span class="t" style="left:358px;top:202.99px;font-size:11px;line-height:14px;color:#000;letter-spacing:-0.3px;transform:scaleX(0.94);transform-origin:0 0"><u>H</u>elp</span>
<div style="left:401px;top:202px;width:148px;height:18px;background:#fff"></div>
<div style="left:537px;top:203px;width:11px;height:16px;background:#c1d5f8"></div>
<svg class="i" style="left:540px;top:210px" width="5" height="3" viewBox="0 0 5 3" fill="#000" shape-rendering="crispEdges"><rect x="0" y="0" width="5" height="1"/><rect x="1" y="1" width="3" height="1"/><rect x="2" y="2" width="1" height="1"/></svg>
<span class="t" style="left:403.2px;top:202.79px;font-size:11px;line-height:14px;color:#808080;letter-spacing:0.02px">Type a question for help</span>
<svg class="i" style="left:555px;top:207px" width="8" height="8" viewBox="0 0 8 8" ><path d="M0.800 0.800l6.400 6.400M7.200 0.800l-6.400 6.400" stroke="#000" stroke-width="1.400" fill="none"/></svg>
<div style="left:7px;top:224px;width:124px;height:25px;background:linear-gradient(#d6e6fc 0,#c2d7f7 30%,#a3c0ef 65%,#8aaee6 90%,#84a9e3 96%,#4a76c6 96%,#4a76c6 100%);border-radius:4px 0 0 4px"></div>
<div style="left:130px;top:224px;width:12px;height:25px;background:linear-gradient(#7598e0 0,#4a72cc 25%,#2348a8 70%,#0f318c 100%);border-radius:0 3px 3px 0"></div>
<svg class="i" style="left:133px;top:228px" width="8" height="5" viewBox="0 0 8 5" ><path d="M0.500 0.300l2.200 2.200-2.200 2.200zM4.500 0.300l2.200 2.200-2.200 2.200z" fill="#fff"/></svg>
<div style="left:134px;top:239px;width:6px;height:1px;background:#fff"></div>
<svg class="i" style="left:133px;top:241px" width="9" height="6" viewBox="0 0 9 6" ><path d="M2 1.500h6l-3 3.200z" fill="#fff"/><path d="M1 0.500h6l-3 3.200z" fill="#000"/></svg>
<div style="left:11px;top:229px;width:2px;height:2px;background:#eef4fe"></div>
<div style="left:10px;top:228px;width:2px;height:2px;background:#27418c"></div>
<div style="left:11px;top:232px;width:2px;height:2px;background:#eef4fe"></div>
<div style="left:10px;top:231px;width:2px;height:2px;background:#27418c"></div>
<div style="left:11px;top:235px;width:2px;height:2px;background:#eef4fe"></div>
<div style="left:10px;top:234px;width:2px;height:2px;background:#27418c"></div>
<div style="left:11px;top:238px;width:2px;height:2px;background:#eef4fe"></div>
<div style="left:10px;top:237px;width:2px;height:2px;background:#27418c"></div>
<div style="left:11px;top:241px;width:2px;height:2px;background:#eef4fe"></div>
<div style="left:10px;top:240px;width:2px;height:2px;background:#27418c"></div>
<svg class="i" style="left:19px;top:229px" width="12" height="14" viewBox="0 0 12 14" >
<path d="M0.500 0.500h6.500l3.500 3.500v9h-10z" fill="url(#gn)" stroke="#93a1c6"/>
<path d="M7 0.500l3.500 3.500v9h-10" fill="none" stroke="#3f4f7a"/>
<path d="M7 0.500v3.500h3.500" fill="#fff" stroke="#5b6a94" stroke-width="0.800"/></svg>
<svg class="i" style="left:40px;top:228px" width="17" height="15" viewBox="0 0 17 15" >
<path d="M0.500 13.500v-9.500h1l1-1.500h3.500l1 1.500h5.500v2.500" fill="#f5d98a" stroke="#a77f1c"/>
<path d="M0.500 13.500l3-6.500h12.500l-3.500 6.500z" fill="#f3c64e" stroke="#a77f1c"/>
<path d="M9 2.500c1.500-2 4.500-2 5.500 0.500" fill="none" stroke="#4a6cb0" stroke-width="1.200"/>
<path d="M15.800 0.800v3.400h-3.400z" fill="#4a6cb0"/></svg>
<svg class="i" style="left:64px;top:229px" width="14" height="14" viewBox="0 0 14 14" >
<path d="M0.500 0.500h13v13h-11.500l-1.500-1.500z" fill="url(#gs)" stroke="#3a348f"/>
<rect x="2.500" y="0.500" width="9" height="6.300" fill="url(#gl)"/>
<rect x="3.500" y="9" width="6.500" height="4.500" fill="#25253a"/>
<rect x="6.500" y="10" width="2.500" height="3.500" fill="#e9ebf3"/></svg>
<div style="left:85px;top:228px;width:1px;height:15px;background:#6a8ccb"></div>
<div style="left:86px;top:229px;width:1px;height:15px;background:#f1f6fe"></div>
<svg class="i" style="left:93px;top:229px" width="14" height="14" viewBox="0 0 14 14" >
<path d="M2.500 5.500c3-3.500 8.500-2.500 8.500 1.500c0 3-2 4.500-4 6" fill="none" stroke="#a9bee3" stroke-width="2.200" stroke-linecap="round"/>
<path d="M0.500 2v6h6z" fill="#a9bee3"/></svg>
<svg class="i" style="left:114px;top:235px" width="5" height="3" viewBox="0 0 5 3" fill="#8f8f8f" shape-rendering="crispEdges"><rect x="0" y="0" width="5" height="1"/><rect x="1" y="1" width="3" height="1"/><rect x="2" y="2" width="1" height="1"/></svg>
<div style="left:145px;top:224px;width:411px;height:25px;background:linear-gradient(#d6e6fc 0,#c2d7f7 30%,#a3c0ef 65%,#8aaee6 90%,#84a9e3 96%,#4a76c6 96%,#4a76c6 100%);border-radius:4px 0 0 4px"></div>
<div style="left:556px;top:224px;width:12px;height:25px;background:linear-gradient(#7598e0 0,#4a72cc 25%,#2348a8 70%,#0f318c 100%);border-radius:0 3px 3px 0"></div>
<svg class="i" style="left:559px;top:228px" width="8" height="5" viewBox="0 0 8 5" ><path d="M0.500 0.300l2.200 2.200-2.200 2.200zM4.500 0.300l2.200 2.200-2.200 2.200z" fill="#fff"/></svg>
<div style="left:560px;top:239px;width:6px;height:1px;background:#fff"></div>
<svg class="i" style="left:559px;top:241px" width="9" height="6" viewBox="0 0 9 6" ><path d="M2 1.500h6l-3 3.200z" fill="#fff"/><path d="M1 0.500h6l-3 3.200z" fill="#000"/></svg>
<div style="left:149px;top:229px;width:2px;height:2px;background:#eef4fe"></div>
<div style="left:148px;top:228px;width:2px;height:2px;background:#27418c"></div>
<div style="left:149px;top:232px;width:2px;height:2px;background:#eef4fe"></div>
<div style="left:148px;top:231px;width:2px;height:2px;background:#27418c"></div>
<div style="left:149px;top:235px;width:2px;height:2px;background:#eef4fe"></div>
<div style="left:148px;top:234px;width:2px;height:2px;background:#27418c"></div>
<div style="left:149px;top:238px;width:2px;height:2px;background:#eef4fe"></div>
<div style="left:148px;top:237px;width:2px;height:2px;background:#27418c"></div>
<div style="left:149px;top:241px;width:2px;height:2px;background:#eef4fe"></div>
<div style="left:148px;top:240px;width:2px;height:2px;background:#27418c"></div>
<div style="left:153px;top:227px;width:110.5px;height:18px;background:#fff"></div>
<div style="left:251.5px;top:228px;width:11px;height:16px;background:linear-gradient(#d3e2fb,#a9c4f0)"></div>
<svg class="i" style="left:255px;top:235px" width="5" height="3" viewBox="0 0 5 3" fill="#000" shape-rendering="crispEdges"><rect x="0" y="0" width="5" height="1"/><rect x="1" y="1" width="3" height="1"/><rect x="2" y="2" width="1" height="1"/></svg>
<span class="t" style="left:155.5px;top:228.19px;font-size:11px;line-height:14px;color:#000;letter-spacing:-0.42px">Times New Roman</span>
<div style="left:266px;top:227px;width:36px;height:18px;background:#fff"></div>
<div style="left:290px;top:228px;width:11px;height:16px;background:linear-gradient(#d3e2fb,#a9c4f0)"></div>
<svg class="i" style="left:294px;top:235px" width="5" height="3" viewBox="0 0 5 3" fill="#000" shape-rendering="crispEdges"><rect x="0" y="0" width="5" height="1"/><rect x="1" y="1" width="3" height="1"/><rect x="2" y="2" width="1" height="1"/></svg>
<span class="t" style="left:268.5px;top:228.19px;font-size:11px;line-height:14px;color:#000;letter-spacing:0px">12</span>
<div style="left:305px;top:228px;width:1px;height:15px;background:#6a8ccb"></div>
<div style="left:306px;top:229px;width:1px;height:15px;background:#f1f6fe"></div>
<div style="left:309px;top:225px;width:21px;height:20px;background:linear-gradient(#fcc88a,#fdb25a);border:1px solid #000080"></div>
<span class="t" style="left:315.3px;top:227px;font:bold 14px/18px 'Liberation Serif',serif;color:#000">B</span>
<span class="t" style="left:339px;top:227px;font:italic bold 14px/18px 'Liberation Serif',serif;color:#000">I</span>
<span class="t" style="left:360.5px;top:227px;font:bold 13.500px/18px 'Liberation Serif',serif;color:#000">U</span>
<div style="left:360px;top:242px;width:11px;height:1px;background:#000"></div>
<div style="left:380px;top:228px;width:1px;height:15px;background:#6a8ccb"></div>
<div style="left:381px;top:229px;width:1px;height:15px;background:#f1f6fe"></div>
<div style="left:384px;top:225px;width:21px;height:20px;background:linear-gradient(#fcc88a,#fdb25a);border:1px solid #000080"></div>
<svg class="i" style="left:389px;top:230px" width="16" height="14" viewBox="0 0 16 14" fill="#000" shape-rendering="crispEdges"><rect x="0" y="0" width="14" height="1"/><rect x="0" y="2" width="10" height="1"/><rect x="0" y="4" width="14" height="1"/><rect x="0" y="6" width="10" height="1"/><rect x="0" y="8" width="14" height="1"/><rect x="0" y="10" width="10" height="1"/></svg>
<svg class="i" style="left:411px;top:230px" width="16" height="14" viewBox="0 0 16 14" fill="#000" shape-rendering="crispEdges"><rect x="0" y="0" width="14" height="1"/><rect x="2" y="2" width="10" height="1"/><rect x="0" y="4" width="14" height="1"/><rect x="2" y="6" width="10" height="1"/><rect x="0" y="8" width="14" height="1"/><rect x="2" y="10" width="10" height="1"/></svg>
<div style="left:432.5px;top:228px;width:1px;height:15px;background:#6a8ccb"></div>
<div style="left:433.5px;top:229px;width:1px;height:15px;background:#f1f6fe"></div>
<svg class="i" style="left:445px;top:230px" width="16" height="14" viewBox="0 0 16 14" fill="#000" shape-rendering="crispEdges"><rect x="0" y="0" width="9" height="1"/><rect x="0" y="5" width="9" height="1"/><rect x="0" y="10" width="9" height="1"/></svg>
<span class="t" style="left:440px;top:227px;font:bold 6px/7px 'Liberation Sans',sans-serif;color:#3a5fc0">1</span>
<span class="t" style="left:440px;top:232px;font:bold 6px/7px 'Liberation Sans',sans-serif;color:#3a5fc0">2</span>
<span class="t" style="left:440px;top:237px;font:bold 6px/7px 'Liberation Sans',sans-serif;color:#3a5fc0">3</span>
<svg class="i" style="left:468px;top:230px" width="16" height="14" viewBox="0 0 16 14" fill="#000" shape-rendering="crispEdges"><rect x="0" y="0" width="8" height="1"/><rect x="0" y="5" width="8" height="1"/><rect x="0" y="10" width="8" height="1"/></svg>
<svg class="i" style="left:463px;top:229px" width="4" height="14" viewBox="0 0 4 14" fill="#3a5fc0"><circle cx="1.500" cy="1.500" r="1.500"/><circle cx="1.500" cy="6.500" r="1.500"/><circle cx="1.500" cy="11.500" r="1.500"/></svg>
<svg class="i" style="left:485px;top:228px" width="17" height="15" viewBox="0 0 17 15" fill="#000" shape-rendering="crispEdges"><rect x="2" y="2" width="14" height="1"/><rect x="8" y="4" width="8" height="2"/><rect x="8" y="7" width="5" height="2"/><rect x="2" y="10" width="14" height="1"/><rect x="2" y="12" width="7" height="1"/><rect x="6" y="0" width="3" height="15" fill="#c3d8f7" opacity="0.0"/><rect x="7" y="0" width="1" height="1"/><rect x="7" y="2" width="1" height="1"/><rect x="7" y="4" width="1" height="1"/><rect x="7" y="6" width="1" height="1"/><rect x="7" y="8" width="1" height="1"/><rect x="7" y="10" width="1" height="1"/><rect x="7" y="12" width="1" height="1"/><rect x="7" y="14" width="1" height="1"/></svg>
<svg class="i" style="left:485px;top:231px" width="7" height="7" viewBox="0 0 7 7" ><path d="M0 3.500h5M2.500 0.800l2.700 2.700L2.500 6.200" fill="none" stroke="#3358c4" stroke-width="1.400"/></svg>
<div style="left:507px;top:228px;width:1px;height:15px;background:#6a8ccb"></div>
<div style="left:508px;top:229px;width:1px;height:15px;background:#f1f6fe"></div>
<span class="t" style="left:515px;top:226px;font:bold 16px/16px 'Liberation Serif',serif;color:#3b5a9e">A</span>
<div style="left:514px;top:241px;width:16px;height:3px;background:#ff0000"></div>
<svg class="i" style="left:536px;top:235px" width="5" height="3" viewBox="0 0 5 3" fill="#000" shape-rendering="crispEdges"><rect x="0" y="0" width="5" height="1"/><rect x="1" y="1" width="3" height="1"/><rect x="2" y="2" width="1" height="1"/></svg>
<div style="left:4px;top:249px;width:564px;height:1px;background:#aca893"></div>
<div style="left:5px;top:250px;width:563px;height:1px;background:#716f64"></div>
<div style="left:4px;top:251px;width:564px;height:163px;background:#d7e6fc"></div>
<div style="left:4px;top:249px;width:1px;height:165px;background:#aca893"></div>
<div style="left:5px;top:250px;width:1px;height:164px;background:#716f64"></div>
<div style="left:6px;top:251px;width:562px;height:1px;background:#eef4fe"></div>
<div style="left:6px;top:251px;width:1px;height:163px;background:#eef4fe"></div>
<div style="left:9px;top:254px;width:17px;height:16px;background:#dfeafc;border:1px solid #4a72c9;box-sizing:border-box;box-shadow:0 1px 0 0 #f4f8fe, inset 1px 1px 0 0 #fff"></div>
<div style="left:15px;top:260px;width:2px;height:6px;background:#000"></div>
<div style="left:15px;top:264px;width:6px;height:2px;background:#000"></div>
<div style="left:44px;top:256px;width:6px;height:13px;background:#9dbaef"></div>
<div style="left:52px;top:256px;width:471px;height:13px;background:#fff"></div>
<div style="left:526px;top:256px;width:9px;height:13px;background:#9dbaef"></div>
<div style="left:47px;top:261px;width:1px;height:2px;background:#000"></div>
<div style="left:59px;top:261px;width:1px;height:2px;background:#000"></div>
<div style="left:64px;top:260px;width:1px;height:5px;background:#000"></div>
<div style="left:70px;top:261px;width:1px;height:2px;background:#000"></div>
<div style="left:82px;top:261px;width:1px;height:2px;background:#000"></div>
<div style="left:87px;top:260px;width:1px;height:5px;background:#000"></div>
<div style="left:93px;top:261px;width:1px;height:2px;background:#000"></div>
<span class="t rn" style="left:89.40px;top:252.50px">2</span>
<div style="left:104px;top:261px;width:1px;height:2px;background:#000"></div>
<div style="left:110px;top:260px;width:1px;height:5px;background:#000"></div>
<div style="left:116px;top:261px;width:1px;height:2px;background:#000"></div>
<div style="left:127px;top:261px;width:1px;height:2px;background:#000"></div>
<div style="left:133px;top:260px;width:1px;height:5px;background:#000"></div>
<div style="left:138px;top:261px;width:1px;height:2px;background:#000"></div>
<span class="t rn" style="left:134.90px;top:252.50px">4</span>
<div style="left:150px;top:261px;width:1px;height:2px;background:#000"></div>
<div style="left:155px;top:260px;width:1px;height:5px;background:#000"></div>
<div style="left:161px;top:261px;width:1px;height:2px;background:#000"></div>
<div style="left:173px;top:261px;width:1px;height:2px;background:#000"></div>
<div style="left:178px;top:260px;width:1px;height:5px;background:#000"></div>
<div style="left:184px;top:261px;width:1px;height:2px;background:#000"></div>
<span class="t rn" style="left:180.40px;top:252.50px">6</span>
<div style="left:195px;top:261px;width:1px;height:2px;background:#000"></div>
<div style="left:201px;top:260px;width:1px;height:5px;background:#000"></div>
<div style="left:207px;top:261px;width:1px;height:2px;background:#000"></div>
<div style="left:218px;top:261px;width:1px;height:2px;background:#000"></div>
<div style="left:224px;top:260px;width:1px;height:5px;background:#000"></div>
<div style="left:229px;top:261px;width:1px;height:2px;background:#000"></div>
<span class="t rn" style="left:225.90px;top:252.50px">8</span>
<div style="left:241px;top:261px;width:1px;height:2px;background:#000"></div>
<div style="left:246px;top:260px;width:1px;height:5px;background:#000"></div>
<div style="left:252px;top:261px;width:1px;height:2px;background:#000"></div>
<div style="left:264px;top:261px;width:1px;height:2px;background:#000"></div>
<div style="left:269px;top:260px;width:1px;height:5px;background:#000"></div>
<div style="left:275px;top:261px;width:1px;height:2px;background:#000"></div>
<span class="t rn" style="left:271.40px;top:252.50px">10</span>
<div style="left:286px;top:261px;width:1px;height:2px;background:#000"></div>
<div style="left:292px;top:260px;width:1px;height:5px;background:#000"></div>
<div style="left:298px;top:261px;width:1px;height:2px;background:#000"></div>
<div style="left:309px;top:261px;width:1px;height:2px;background:#000"></div>
<div style="left:315px;top:260px;width:1px;height:5px;background:#000"></div>
<div style="left:320px;top:261px;width:1px;height:2px;background:#000"></div>
<span class="t rn" style="left:316.90px;top:252.50px">12</span>
<div style="left:332px;top:261px;width:1px;height:2px;background:#000"></div>
<div style="left:337px;top:260px;width:1px;height:5px;background:#000"></div>
<div style="left:343px;top:261px;width:1px;height:2px;background:#000"></div>
<div style="left:355px;top:261px;width:1px;height:2px;background:#000"></div>
<div style="left:360px;top:260px;width:1px;height:5px;background:#000"></div>
<div style="left:366px;top:261px;width:1px;height:2px;background:#000"></div>
<span class="t rn" style="left:362.40px;top:252.50px">14</span>
<div style="left:377px;top:261px;width:1px;height:2px;background:#000"></div>
<div style="left:383px;top:260px;width:1px;height:5px;background:#000"></div>
<div style="left:389px;top:261px;width:1px;height:2px;background:#000"></div>
<div style="left:400px;top:261px;width:1px;height:2px;background:#000"></div>
<div style="left:406px;top:260px;width:1px;height:5px;background:#000"></div>
<div style="left:411px;top:261px;width:1px;height:2px;background:#000"></div>
<span class="t rn" style="left:407.90px;top:252.50px">16</span>
<div style="left:423px;top:261px;width:1px;height:2px;background:#000"></div>
<div style="left:428px;top:260px;width:1px;height:5px;background:#000"></div>
<div style="left:434px;top:261px;width:1px;height:2px;background:#000"></div>
<div style="left:446px;top:261px;width:1px;height:2px;background:#000"></div>
<div style="left:451px;top:260px;width:1px;height:5px;background:#000"></div>
<div style="left:457px;top:261px;width:1px;height:2px;background:#000"></div>
<span class="t rn" style="left:453.40px;top:252.50px">18</span>
<div style="left:468px;top:261px;width:1px;height:2px;background:#000"></div>
<div style="left:474px;top:260px;width:1px;height:5px;background:#000"></div>
<div style="left:480px;top:261px;width:1px;height:2px;background:#000"></div>
<div style="left:491px;top:261px;width:1px;height:2px;background:#000"></div>
<div style="left:497px;top:260px;width:1px;height:5px;background:#000"></div>
<div style="left:502px;top:261px;width:1px;height:2px;background:#000"></div>
<span class="t rn" style="left:498.90px;top:252.50px">20</span>
<div style="left:514px;top:261px;width:1px;height:2px;background:#000"></div>
<svg class="i" style="left:49px;top:253px" width="9" height="21" viewBox="0 0 9 21" ><g fill="#ece9d8" stroke="#1a1a1a" stroke-width="1">
<path d="M0.500 0.500h8v3l-4 4-4-4z"/><path d="M0.500 14.500v-3l4-4 4 4v3z"/><rect x="0.500" y="14.500" width="8" height="6"/></g></svg>
<div style="left:521px;top:260px;width:1px;height:5px;background:#000"></div>
<div style="left:527px;top:261px;width:1px;height:2px;background:#000"></div>
<svg class="i" style="left:520px;top:261px" width="9" height="8" viewBox="0 0 9 8" ><path d="M0.500 7.500v-3l4-4 4 4v3z" fill="#ece9d8" stroke="#1a1a1a"/></svg>
<div style="left:82px;top:270px;width:1px;height:3px;background:#8590ad"></div>
<div style="left:111px;top:270px;width:1px;height:3px;background:#8590ad"></div>
<div style="left:140px;top:270px;width:1px;height:3px;background:#8590ad"></div>
<div style="left:169px;top:270px;width:1px;height:3px;background:#8590ad"></div>
<div style="left:198px;top:270px;width:1px;height:3px;background:#8590ad"></div>
<div style="left:226px;top:270px;width:1px;height:3px;background:#8590ad"></div>
<div style="left:255px;top:270px;width:1px;height:3px;background:#8590ad"></div>
<div style="left:284px;top:270px;width:1px;height:3px;background:#8590ad"></div>
<div style="left:313px;top:270px;width:1px;height:3px;background:#8590ad"></div>
<div style="left:342px;top:270px;width:1px;height:3px;background:#8590ad"></div>
<div style="left:371px;top:270px;width:1px;height:3px;background:#8590ad"></div>
<div style="left:400px;top:270px;width:1px;height:3px;background:#8590ad"></div>
<div style="left:429px;top:270px;width:1px;height:3px;background:#8590ad"></div>
<div style="left:458px;top:270px;width:1px;height:3px;background:#8590ad"></div>
<div style="left:487px;top:270px;width:1px;height:3px;background:#8590ad"></div>
<div style="left:516px;top:270px;width:1px;height:3px;background:#8590ad"></div>
<div style="left:30px;top:275px;width:519px;height:139px;background:#8f9bb8"></div>
<div style="left:10px;top:275px;width:16px;height:139px;background:#fff"></div>
<div style="left:17px;top:283px;width:2px;height:1px;background:#000"></div>
<div style="left:15px;top:289px;width:5px;height:1px;background:#000"></div>
<div style="left:17px;top:294px;width:2px;height:1px;background:#000"></div>
<span class="t vn" style="left:8.00px;top:290.60px">2</span>
<div style="left:17px;top:306px;width:2px;height:1px;background:#000"></div>
<div style="left:15px;top:311px;width:5px;height:1px;background:#000"></div>
<div style="left:17px;top:317px;width:2px;height:1px;background:#000"></div>
<div style="left:17px;top:329px;width:2px;height:1px;background:#000"></div>
<div style="left:15px;top:334px;width:5px;height:1px;background:#000"></div>
<div style="left:17px;top:340px;width:2px;height:1px;background:#000"></div>
<span class="t vn" style="left:8.00px;top:336.10px">4</span>
<div style="left:17px;top:351px;width:2px;height:1px;background:#000"></div>
<div style="left:15px;top:357px;width:5px;height:1px;background:#000"></div>
<div style="left:17px;top:363px;width:2px;height:1px;background:#000"></div>
<div style="left:17px;top:374px;width:2px;height:1px;background:#000"></div>
<div style="left:15px;top:380px;width:5px;height:1px;background:#000"></div>
<div style="left:17px;top:385px;width:2px;height:1px;background:#000"></div>
<span class="t vn" style="left:8.00px;top:381.60px">6</span>
<div style="left:17px;top:397px;width:2px;height:1px;background:#000"></div>
<div style="left:15px;top:402px;width:5px;height:1px;background:#000"></div>
<div style="left:17px;top:408px;width:2px;height:1px;background:#000"></div>
<div style="left:42px;top:275px;width:497px;height:139px;background:#000"></div>
<div style="left:43px;top:275px;width:493px;height:139px;background:#fff"></div>
<div style="left:65px;top:275px;width:4px;height:1px;background:#ff2020"></div>
<div style="left:72px;top:275px;width:2px;height:1px;background:#ff2020"></div>
<div style="left:84px;top:275px;width:4px;height:1px;background:#ff2020"></div>
<div style="left:153px;top:275px;width:4px;height:1px;background:#ff2020"></div>
<div style="left:184px;top:275px;width:2px;height:1px;background:#ff2020"></div>
<div style="left:52px;top:276px;width:1px;height:140px;background:#a6a6a6"></div>
<div style="left:205px;top:276px;width:1px;height:140px;background:#a6a6a6"></div>
<div style="left:212px;top:276px;width:1px;height:140px;background:#a6a6a6"></div>
<div style="left:364px;top:276px;width:1px;height:140px;background:#a6a6a6"></div>
<div style="left:372px;top:276px;width:1px;height:140px;background:#a6a6a6"></div>
<div style="left:524px;top:276px;width:1px;height:140px;background:#a6a6a6"></div>
<div style="left:52px;top:276px;width:473px;height:1px;background:#a6a6a6"></div>
<div style="left:52px;top:334px;width:473px;height:1px;background:#a6a6a6"></div>
<div style="left:52px;top:392px;width:473px;height:1px;background:#a6a6a6"></div>
<span class="t" style="left:58px;top:281.03px;font-size:8px;line-height:9px;color:#000;-webkit-text-stroke:0.2px #000;">Cactus Comidas para llevar</span>
<span class="t" style="left:58px;top:290.38px;font-size:8px;line-height:9px;color:#000;-webkit-text-stroke:0.2px #000;">Cerrito 333</span>
<span class="t" style="left:58px;top:299.73px;font-size:8px;line-height:9px;color:#000;-webkit-text-stroke:0.2px #000;">Buenos Aires 1010</span>
<span class="t" style="left:58px;top:309.08px;font-size:8px;line-height:9px;color:#000;-webkit-text-stroke:0.2px #000;">Argentina</span>
<span class="t" style="left:218.3px;top:276.43px;font-size:8px;line-height:9px;color:#000;-webkit-text-stroke:0.2px #000;">Océano Atlántico Ltda.</span>
<span class="t" style="left:218.3px;top:285.78px;font-size:8px;line-height:9px;color:#000;-webkit-text-stroke:0.2px #000;">Ing. Gustavo Moncada 8585</span>
<span class="t" style="left:218.3px;top:295.13px;font-size:8px;line-height:9px;color:#000;-webkit-text-stroke:0.2px #000;">Piso 20-A</span>
<span class="t" style="left:218.3px;top:304.48px;font-size:8px;line-height:9px;color:#000;-webkit-text-stroke:0.2px #000;">Buenos Aires 1010</span>
<span class="t" style="left:218.3px;top:313.83px;font-size:8px;line-height:9px;color:#000;-webkit-text-stroke:0.2px #000;">Argentina</span>
<span class="t" style="left:377.4px;top:281.43px;font-size:8px;line-height:9px;color:#000;-webkit-text-stroke:0.2px #000;">Rancho grande</span>
<span class="t" style="left:377.4px;top:290.78px;font-size:8px;line-height:9px;color:#000;-webkit-text-stroke:0.2px #000;">Av. del Libertador 900</span>
<span class="t" style="left:377.4px;top:300.13px;font-size:8px;line-height:9px;color:#000;-webkit-text-stroke:0.2px #000;">Buenos Aires 1010</span>
<span class="t" style="left:377.4px;top:309.48px;font-size:8px;line-height:9px;color:#000;-webkit-text-stroke:0.2px #000;">Argentina</span>
<span class="t" style="left:58px;top:339.23px;font-size:8px;line-height:9px;color:#000;-webkit-text-stroke:0.2px #000;">Ernst Handel</span>
<span class="t" style="left:58px;top:348.58px;font-size:8px;line-height:9px;color:#000;-webkit-text-stroke:0.2px #000;">Kirchgasse 6</span>
<span class="t" style="left:58px;top:357.93px;font-size:8px;line-height:9px;color:#000;-webkit-text-stroke:0.2px #000;">Graz 8010</span>
<span class="t" style="left:58px;top:367.28px;font-size:8px;line-height:9px;color:#000;-webkit-text-stroke:0.2px #000;">Austria</span>
<span class="t" style="left:218.3px;top:339.23px;font-size:8px;line-height:9px;color:#000;-webkit-text-stroke:0.2px #000;">Piccolo und mehr</span>
<span class="t" style="left:218.3px;top:348.58px;font-size:8px;line-height:9px;color:#000;-webkit-text-stroke:0.2px #000;">Geislweg 14</span>
<span class="t" style="left:218.3px;top:357.93px;font-size:8px;line-height:9px;color:#000;-webkit-text-stroke:0.2px #000;">Salzburg 5020</span>
<span class="t" style="left:218.3px;top:367.28px;font-size:8px;line-height:9px;color:#000;-webkit-text-stroke:0.2px #000;">Austria</span>
<span class="t" style="left:377.4px;top:339.23px;font-size:8px;line-height:9px;color:#000;-webkit-text-stroke:0.2px #000;">Maison Dewey</span>
<span class="t" style="left:377.4px;top:348.58px;font-size:8px;line-height:9px;color:#000;-webkit-text-stroke:0.2px #000;">Rue Joseph-Bens 532</span>
<span class="t" style="left:377.4px;top:357.93px;font-size:8px;line-height:9px;color:#000;-webkit-text-stroke:0.2px #000;">Bruxelles B-1180</span>
<span class="t" style="left:377.4px;top:367.28px;font-size:8px;line-height:9px;color:#000;-webkit-text-stroke:0.2px #000;">Belgium</span>
<span class="t" style="left:58px;top:397.03px;font-size:8px;line-height:9px;color:#000;-webkit-text-stroke:0.2px #000;">Suprêmes délices</span>
<span class="t" style="left:58px;top:406.38px;font-size:8px;line-height:9px;color:#000;-webkit-text-stroke:0.2px #000;">Boulevard Tirou, 255</span>
<span class="t" style="left:218.3px;top:397.03px;font-size:8px;line-height:9px;color:#000;-webkit-text-stroke:0.2px #000;">Comércio Mineiro</span>
<span class="t" style="left:218.3px;top:406.38px;font-size:8px;line-height:9px;color:#000;-webkit-text-stroke:0.2px #000;">Av. dos Lusíadas, 23</span>
<span class="t" style="left:377.4px;top:397.03px;font-size:8px;line-height:9px;color:#000;-webkit-text-stroke:0.2px #000;">Família Arquibaldo</span>
<span class="t" style="left:377.4px;top:406.38px;font-size:8px;line-height:9px;color:#000;-webkit-text-stroke:0.2px #000;">Rua Orós, 92</span>
<div style="left:549px;top:251px;width:17px;height:163px;background:linear-gradient(90deg,#f1f0e9,#f8f7f3 35%,#fdfdf9 70%,#fdfdf9 88%,#efeee4 92%)"></div>
<div style="left:566px;top:251px;width:1px;height:163px;background:#f4f3ec"></div>
<div style="left:567px;top:249px;width:1px;height:165px;background:#fff"></div>
<div style="left:549px;top:251px;width:17px;height:6px;background:#ece9d8;box-sizing:border-box;border:1px solid #fff;border-right-color:#000;border-bottom-color:#000;box-shadow:inset -1px -1px 0 #aca899"></div>
<div style="left:550px;top:258px;width:15px;height:15px;background:linear-gradient(135deg,#cfdcfd,#b7caf7);box-sizing:border-box;border:1px solid #fff;border-radius:3px;box-shadow:inset -1px -1px 0 #9db3ea, inset 1px 1px 0 #d8e3fd;"></div>
<svg class="i" style="left:552px;top:261px" width="11" height="8" viewBox="0 0 11 8" ><path d="M1.200 6.300l4.300-4.300 4.300 4.300" fill="none" stroke="#4d6185" stroke-width="2.200"/></svg>
<div style="left:550px;top:283px;width:15px;height:27px;background:linear-gradient(90deg,#cbdafd,#bccff9 60%,#afc3f3);box-sizing:border-box;border:1px solid #fff;border-radius:3px;box-shadow:inset -1px -1px 0 #9db3ea, inset 1px 1px 0 #d8e3fd;"></div>
<div style="left:554px;top:292px;width:6px;height:1px;background:#eef3fe"></div>
<div style="left:555px;top:293px;width:6px;height:1px;background:#8ca4dc"></div>
<div style="left:554px;top:294px;width:6px;height:1px;background:#eef3fe"></div>
<div style="left:555px;top:295px;width:6px;height:1px;background:#8ca4dc"></div>
<div style="left:554px;top:296px;width:6px;height:1px;background:#eef3fe"></div>
<div style="left:555px;top:297px;width:6px;height:1px;background:#8ca4dc"></div>
<div style="left:554px;top:298px;width:6px;height:1px;background:#eef3fe"></div>
<div style="left:555px;top:299px;width:6px;height:1px;background:#8ca4dc"></div>
</div></body></html>
